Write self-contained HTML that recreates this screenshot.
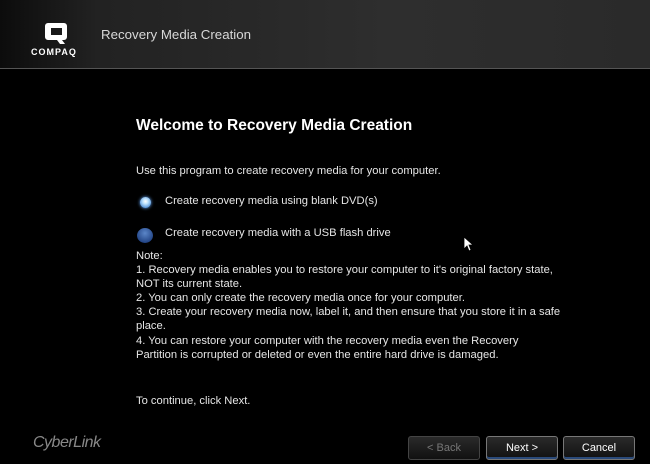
<!DOCTYPE html>
<html><head><style>
body{margin:0;width:650px;height:464px;background:#000;overflow:hidden;font-family:"Liberation Sans",sans-serif;color:#e6e6e6;position:relative}
.hdr{position:absolute;left:0;top:0;width:650px;height:68px;background:linear-gradient(90deg,#0c0c0c 0%,#222 15%,#2e2e2e 60%,#2a2a2a 100%);border-bottom:1px solid #555}
.t{position:absolute;font-size:11.2px;white-space:nowrap}
.btn{position:absolute;top:436px;width:70px;height:22px;border:1px solid #777;border-radius:3px;background:linear-gradient(#2a2a2a,#111);color:#fff;font-size:11px;text-align:center;line-height:22px;box-shadow:inset 0 -2px 0 #2a4a7a}
</style></head><body>
<div class="hdr"></div>
<svg style="position:absolute;left:44px;top:22px" width="26" height="24" viewBox="0 0 26 24"><path d="M4 1h16a3 3 0 0 1 3 3v11a3 3 0 0 1-3 3h-2l3 4h-5l-3-4H4a3 3 0 0 1-3-3V4a3 3 0 0 1 3-3zM7 6v7h11V6z" fill="#fff" fill-rule="evenodd"/></svg>
<div class="t" style="left:31px;top:47px;font-size:9px;font-weight:bold;letter-spacing:1px;color:#fff">COMPAQ</div>
<div class="t" style="left:101px;top:27px;font-size:13.3px;color:#d8d8d8">Recovery Media Creation</div>
<div class="t" style="left:136px;top:117px;font-size:15.5px;font-weight:bold;color:#fff">Welcome to Recovery Media Creation</div>
<div class="t" style="left:136px;top:165px">Use this program to create recovery media for your computer.</div>
<div style="position:absolute;left:140px;top:197px;width:11px;height:11px;border-radius:50%;background:radial-gradient(circle at 50% 40%,#fff 0,#bfe4ff 30%,#4c8cd6 80%);box-shadow:0 0 3px #6af"></div>
<div class="t" style="left:165px;top:195px">Create recovery media using blank DVD(s)</div>
<div style="position:absolute;left:137px;top:228px;width:16px;height:15px;border-radius:50%;background:radial-gradient(circle at 50% 35%,#5b86c8,#1e3f80 80%)"></div>
<div class="t" style="left:165px;top:227px">Create recovery media with a USB flash drive</div>
<div class="t" style="left:136px;top:249px;line-height:14.1px">Note:<br>1. Recovery media enables you to restore your computer to it's original factory state,<br>NOT its current state.<br>2. You can only create the recovery media once for your computer.<br>3. Create your recovery media now, label it, and then ensure that you store it in a safe<br>place.<br>4. You can restore your computer with the recovery media even the Recovery<br>Partition is corrupted or deleted or even the entire hard drive is damaged.</div>
<div class="t" style="left:136px;top:395px">To continue, click Next.</div>
<div class="t" style="left:33px;top:434px;font-size:16px;font-style:italic;color:#888;letter-spacing:-0.5px">CyberLink</div>
<div class="btn" style="left:408px;color:#777;border-color:#444;box-shadow:none">&lt; Back</div>
<div class="btn" style="left:486px">Next &gt;</div>
<div class="btn" style="left:563px">Cancel</div>
<svg style="position:absolute;left:463px;top:236px" width="10" height="16" viewBox="0 0 10 16"><path d="M1 1v12l3-3 2 5 2-1-2-5h4z" fill="#fff" stroke="#000" stroke-width="0.8"/></svg>
</body></html>
